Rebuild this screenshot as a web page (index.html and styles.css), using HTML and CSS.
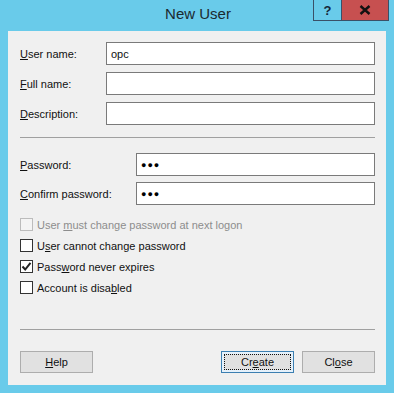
FILE: index.html
```html
<!DOCTYPE html>
<html lang="en">
<head>
  <meta charset="UTF-8">
  <title>New User</title>
  <link rel="stylesheet" href="styles.css">
</head>
<body>
<div class="window">
  <div class="titlebar">
    <span class="title">New User</span>
    <div class="caption-buttons">
      <span class="cap-btn help-cap">?</span>
      <span class="cap-btn close-cap">
        <svg width="12" height="10" viewBox="0 0 12 10"><path d="M1.5 1 L10.5 9 M10.5 1 L1.5 9" stroke="#111" stroke-width="2.4"/></svg>
      </span>
    </div>
  </div>

  <div class="client">
    <div class="fields">
      <div class="field">
        <label for="username"><u>U</u>ser name:</label>
        <input id="username" class="text-input" type="text" value="opc">
      </div>
      <div class="field">
        <label for="fullname"><u>F</u>ull name:</label>
        <input id="fullname" class="text-input" type="text">
      </div>
      <div class="field">
        <label for="description"><u>D</u>escription:</label>
        <input id="description" class="text-input" type="text">
      </div>
    </div>

    <hr class="separator sep-top">

    <div class="fields pw-fields">
      <div class="field">
        <label class="pw-label"><u>P</u>assword:</label>
        <div class="text-input pw-input"><span class="dots">●●●</span></div>
      </div>
      <div class="field">
        <label class="pw-label"><u>C</u>onfirm password:</label>
        <div class="text-input pw-input"><span class="dots">●●●</span></div>
      </div>
    </div>

    <div class="checks">
      <div class="check disabled"><span class="box"></span><span>User <u>m</u>ust change password at next logon</span></div>
      <div class="check"><span class="box"></span><span>U<u>s</u>er cannot change password</span></div>
      <div class="check"><span class="box"><svg width="11" height="11" viewBox="0 0 11 11"><path d="M1.5 5.5 L4.2 8.5 L9.5 1.8" fill="none" stroke="#222" stroke-width="2"/></svg></span><span>Pass<u>w</u>ord never expires</span></div>
      <div class="check"><span class="box"></span><span>Account is disa<u>b</u>led</span></div>
    </div>

    <hr class="separator sep-bottom">

    <div class="buttons">
      <button class="btn"><u>H</u>elp</button>
      <div class="spacer"></div>
      <button class="btn default"><span class="focus-ring">Cr<u>e</u>ate</span></button>
      <button class="btn">Cl<u>o</u>se</button>
    </div>
  </div>
</div>
</body>
</html>
```

FILE: styles.css
```css
* {
  margin: 0;
  padding: 0;
  box-sizing: border-box;
}

body {
  width: 394px;
  height: 393px;
  font-family: 'Liberation Sans', Arial, sans-serif;
  font-size: 12px;
  color: #111;
}

.window {
  width: 394px;
  height: 393px;
  background: #69cbea;
  display: flex;
  flex-direction: column;
}

.titlebar {
  height: 31px;
  position: relative;
  display: flex;
  justify-content: center;
  align-items: flex-start;
}

.title {
  font-size: 15px;
  color: #1b2a30;
  margin-top: 5px;
  margin-left: 2px;
}

.caption-buttons {
  position: absolute;
  top: 0;
  left: 313px;
  display: flex;
  height: 21px;
  border: 1px solid #3a5068;
  border-top: none;
}

.cap-btn {
  display: flex;
  align-items: center;
  justify-content: center;
  height: 20px;
}

.help-cap {
  width: 28px;
  font-weight: bold;
  font-size: 13px;
  color: #14263a;
  border-right: 1px solid #3a5068;
}

.close-cap {
  width: 46px;
  background: #c75050;
}

.client {
  margin: 0 8px;
  height: 354px;
  background: #f0f0f0;
  padding: 11px 11px 0 11px;
  display: flex;
  flex-direction: column;
}

.fields {
  display: flex;
  flex-direction: column;
  gap: 7px;
}

.fields.pw-fields {
  gap: 6px;
}

.field {
  display: flex;
  align-items: center;
  height: 23px;
}

.field label {
  width: 87px;
  flex-shrink: 0;
  font-size: 11px;
  padding-left: 1px;
  white-space: nowrap;
}

.field .pw-label {
  width: 117px;
}

.text-input {
  flex: 1;
  height: 23px;
  border: 1px solid #7a7a7a;
  background: #fff;
  font-family: inherit;
  font-size: 11px;
  padding: 0 4px;
  color: #111;
}

.text-input:focus {
  outline: none;
}

.pw-input {
  display: flex;
  align-items: center;
}

.dots {
  font-size: 9px;
  letter-spacing: 1px;
  color: #000;
}

.separator {
  border: none;
  border-top: 1px solid #a0a0a0;
  margin-left: 1px;
}

.sep-top {
  margin-top: 12px;
  margin-bottom: 15px;
}

.checks {
  display: flex;
  flex-direction: column;
  margin-top: 9px;
}

.check {
  display: flex;
  align-items: center;
  height: 21px;
  font-size: 11px;
  padding-left: 1px;
}

.check .box {
  width: 13px;
  height: 13px;
  border: 1px solid #333;
  background: #fff;
  margin-right: 4px;
  display: flex;
  align-items: center;
  justify-content: center;
}

.check.disabled {
  color: #8d8d8d;
}

.check.disabled .box {
  border-color: #bcbcbc;
  background: #f4f4f4;
}

.sep-bottom {
  margin-top: 31px;
}

.buttons {
  display: flex;
  margin-top: 21px;
  padding-left: 1px;
  gap: 8px;
}

.spacer {
  flex: 1;
}

.btn {
  width: 73px;
  height: 22px;
  background: #e1e1e1;
  border: 1px solid #adadad;
  font-family: inherit;
  font-size: 11px;
  color: #111;
  display: flex;
  align-items: center;
  justify-content: center;
}

.btn.default {
  border-color: #3c7fb1;
  background: #e5f1fb;
  padding: 2px;
}

.focus-ring {
  width: 100%;
  height: 100%;
  border: 1px dotted #111;
  display: flex;
  align-items: center;
  justify-content: center;
  background: #e1e1e1;
}
```
